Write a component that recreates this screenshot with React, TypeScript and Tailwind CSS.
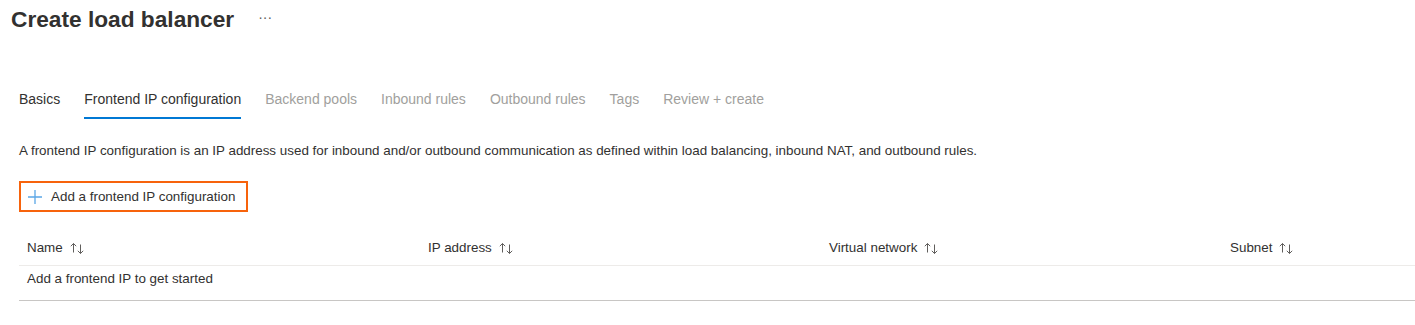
import React from "react";

const tabs = [
  "Basics",
  "Frontend IP configuration",
  "Backend pools",
  "Inbound rules",
  "Outbound rules",
  "Tags",
  "Review + create",
];

const columns = ["Name", "IP address", "Virtual network", "Subnet"];

function SortIcon() {
  return (
    <svg width="18" height="13" viewBox="0 0 18 13" className="ml-[6px] text-[#605e5c]" fill="none" stroke="currentColor" strokeWidth="1">
      <path d="M4.5 1.5v9M1.8 4.2l2.7-2.7 2.7 2.7" />
      <path d="M11.5 2.5v9M8.8 8.8l2.7 2.7 2.7-2.7" />
    </svg>
  );
}

export default function App() {
  return (
    <div className="h-[325px] w-[1415px] overflow-hidden bg-white text-[#323130]" style={{ fontFamily: '"Segoe UI", "Liberation Sans", Arial, sans-serif' }}>
      <div className="flex items-center pl-[11px] pt-[3px]">
        <h1 className="text-[22.7px] font-semibold leading-[32px] text-[#323130]">Create load balancer</h1>
        <span className="ml-[24px] mt-[-4px] text-[14px] text-[#605e5c]">···</span>
      </div>

      <div className="mt-[50px] flex pl-[19px]">
        {tabs.map((t, i) => (
          <div
            key={t}
            className={
              "mr-[24px] flex h-[34px] flex-col justify-between pt-[4px] text-[14px] " +
              (i === 0 || i === 1 ? "text-[#323130]" : "text-[#a19f9d]")
            }
          >
            <span className="leading-[20px]">{t}</span>
            <div className={"h-[2px] " + (i === 1 ? "bg-[#0078d4]" : "bg-transparent")} />
          </div>
        ))}
      </div>

      <p className="mt-[23px] pl-[19px] text-[13.4px] leading-[18px]">
        A frontend IP configuration is an IP address used for inbound and/or outbound communication as defined within load balancing, inbound NAT, and outbound rules.
      </p>

      <div className="ml-[19px] mt-[21px] inline-flex h-[31px] items-center border-2 border-[#f7630c] pl-[6px] pr-[11px]">
        <svg width="16" height="16" viewBox="0 0 16 16" stroke="#5ba7e6" strokeWidth="1.3">
          <path d="M8 1v14M1 8h14" />
        </svg>
        <span className="ml-[8px] text-[13.4px] leading-[18px]">Add a frontend IP configuration</span>
      </div>

      <div className="ml-[19px] mt-[20px]">
        <div className="flex h-[34px] border-b border-[#edebe9]">
          {columns.map((c) => (
            <div key={c} className="flex w-[401px] shrink-0 items-center pl-[8px] text-[13.4px] text-[#323130]">
              {c}
              <SortIcon />
            </div>
          ))}
        </div>
        <div className="h-[35px] border-b border-[#c8c6c4] pl-[8px] pt-[4px] text-[13.4px] leading-[18px] text-[#323130]">
          Add a frontend IP to get started
        </div>
      </div>
    </div>
  );
}
